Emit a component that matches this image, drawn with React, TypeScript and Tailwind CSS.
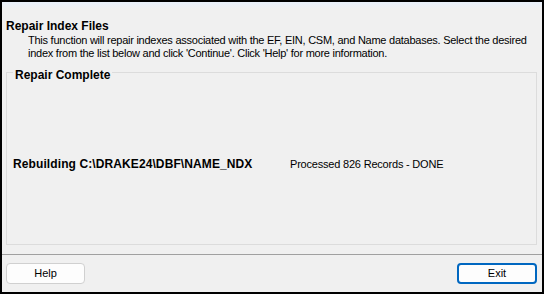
import React from 'react'

const font = { fontFamily: '"Liberation Sans", Arial, sans-serif' }

function DialogButton({ label, primary = false }: { label: string; primary?: boolean }) {
  return (
    <button
      className={
        primary
          ? 'h-[21px] w-[80px] rounded-[4px] border-2 border-[#0067c0] bg-[#fdfdfd] text-[11px] leading-[13px] text-black'
          : 'h-[21px] w-[79px] rounded-[4px] border border-[#d0d0d0] bg-[#fdfdfd] text-[11px] leading-[13px] text-black'
      }
    >
      {label}
    </button>
  )
}

export default function App() {
  return (
    <div
      style={font}
      className="flex h-[294px] w-[544px] flex-col border-2 border-black bg-[#f0f0f0] text-black"
    >
      {/* title bar remnant */}
      <div className="h-[7px] bg-gradient-to-b from-[#eaf1fb] to-[#f0f0f0]" />

      <div className="mt-[10px] pl-[4px] text-[12px] font-bold leading-[14px]">Repair Index Files</div>
      <p className="mt-[1px] whitespace-nowrap pl-[26px] text-[11px] leading-[13px] tracking-[-0.25px]">
        This function will repair indexes associated with the EF, EIN, CSM, and Name databases. Select the desired
        <br />
        index from the list below and click 'Continue'. Click 'Help' for more information.
      </p>

      {/* status group */}
      <div className="relative ml-[4px] mr-[5px] mt-[12px] h-[173px] border border-[#dcdcdc] pt-[84px] pl-[6px]">
        <span className="absolute -top-[5px] left-[6px] bg-[#f0f0f0] px-[2px] text-[12px] font-bold leading-[14px]">
          Repair Complete
        </span>
        <div className="flex items-baseline">
          <span className="w-[277px] text-[12px] font-bold leading-[14px] tracking-[0.1px]">
            Rebuilding C:\DRAKE24\DBF\NAME_NDX
          </span>
          <span className="text-[11px] leading-[14px] tracking-[-0.2px]">Processed 826 Records - DONE</span>
        </div>
      </div>

      <div className="mt-[9px] h-px bg-[#a0a0a0]" />

      <div className="mt-[8px] flex justify-between pl-[4px] pr-[5px]">
        <DialogButton label="Help" />
        <DialogButton label="Exit" primary />
      </div>
    </div>
  )
}
